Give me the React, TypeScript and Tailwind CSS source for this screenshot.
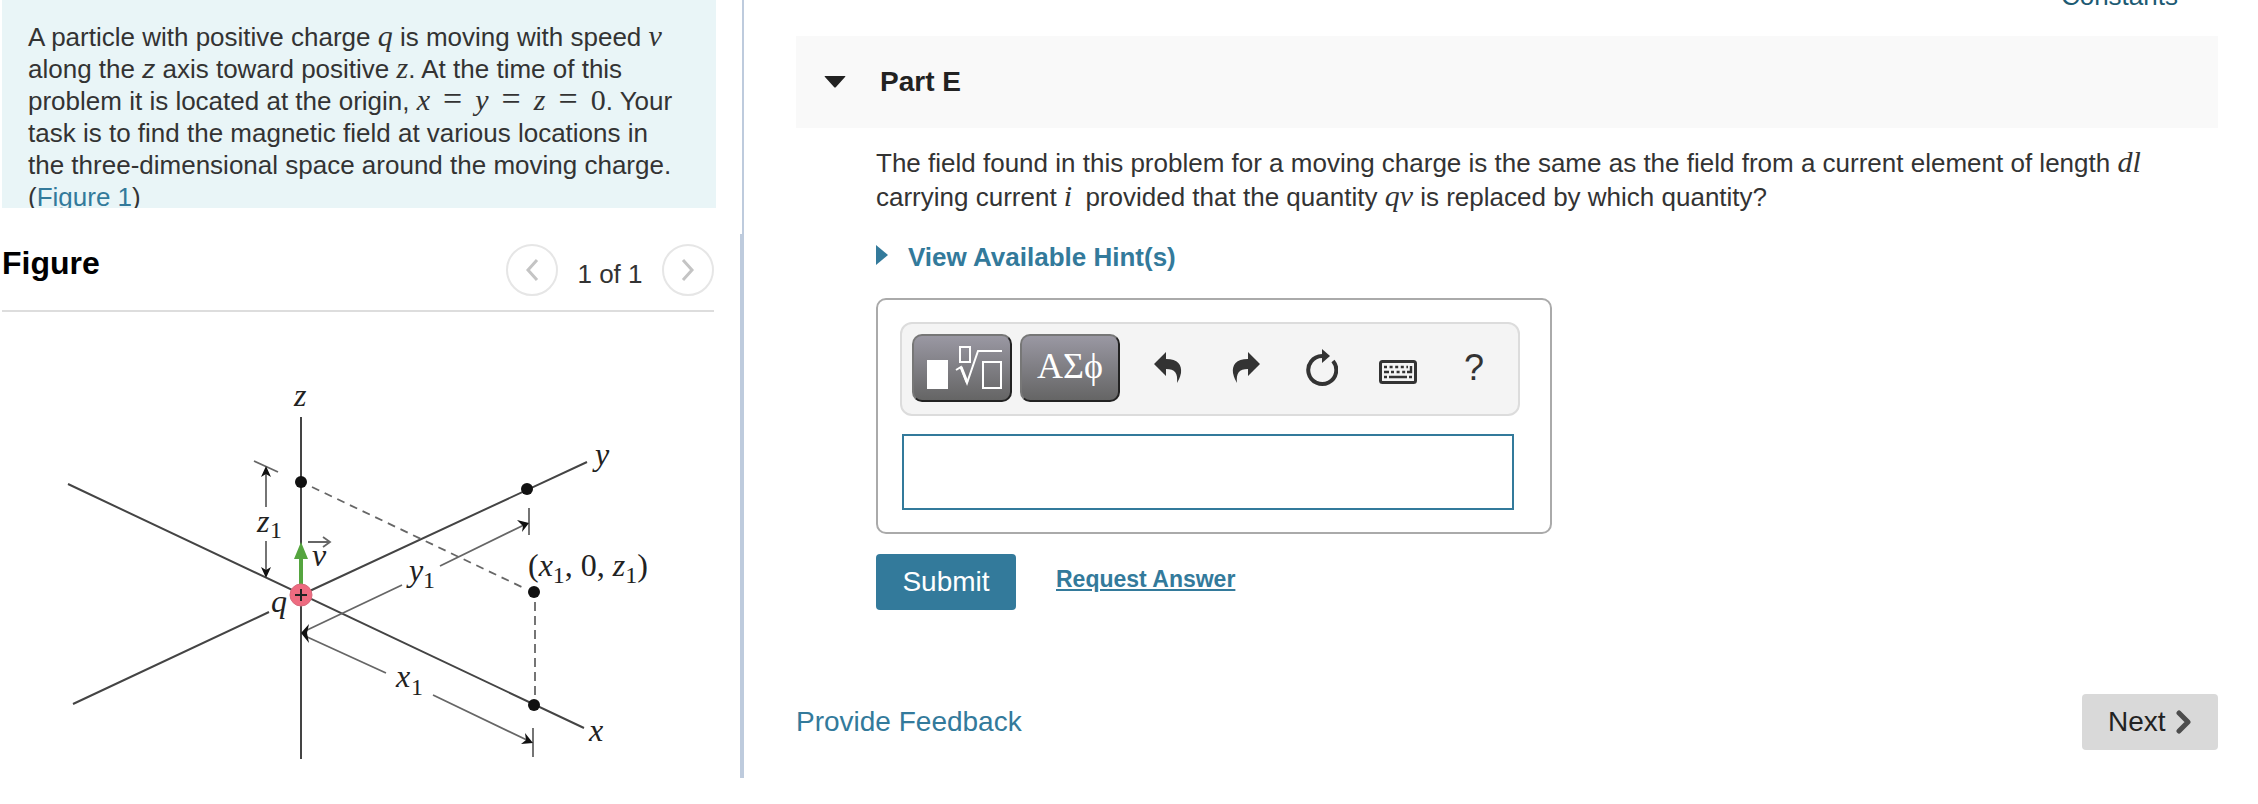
import React from "react";

type Slot = { children: React.ReactNode };

function M({ children }: Slot) {
  return <i className="font-['Liberation_Serif',serif] text-[30px] leading-[20px]">{children}</i>;
}

function Eq() {
  return <span className="mx-[13px] font-['Liberation_Serif',serif] text-[34px] leading-[20px]">=</span>;
}

function AxesFigure() {
  return (
    <svg
      className="block h-[380px] w-[640px]"
      viewBox="40 390 640 380"
      role="img"
      aria-label="Axes with a moving charge at the origin"
      fontFamily="'Liberation Serif', serif"
      fontSize="32"
      fill="#222"
    >
      <g stroke="#444" strokeWidth="2" fill="none">
        <path d="M301 417V759M301 595L587 462M269 612L73 704M68 484L584 728" />
      </g>
      <g stroke="#666" strokeWidth="1.8" fill="none">
        <path d="M254 461L278 472M266 470V507M266 541V573" />
        <path d="M440 566L524 525M402 585L305 631M529 508V535" />
        <path d="M305 636L386 673M433 695L529 741M533 728V757" />
        <path d="M312 487L526 589" strokeDasharray="8 6" />
        <path d="M535 602V698" strokeDasharray="9 5" />
        <path d="M308 542H329M323 537L330 542L323 547" />
      </g>
      <g fill="#111">
        <path d="M266 466L271 477L266 474L261 477ZM266 578L271 567L266 570L261 567Z" />
        <path d="M529 523L522 532L523 526L517 520ZM533 743L521 744L526 740L525 733Z" />
        <path d="M301 633L309 624L307 633L309 643Z" />
        <circle cx="301" cy="482" r="6" />
        <circle cx="527" cy="489" r="6" />
        <circle cx="534" cy="592" r="6" />
        <circle cx="534" cy="705" r="6" />
      </g>
      <path d="M299 585V559H294L301 542L308 559H303V585Z" fill="#55a53f" />
      <circle cx="301" cy="595" r="11" fill="#ee6b80" stroke="#d9697b" />
      <path d="M295 595H307M301 589V601" stroke="#222" strokeWidth="2" />
      <g fontStyle="italic">
        <text x="294" y="406">z</text>
        <text x="595" y="465">y</text>
        <text x="589" y="741">x</text>
        <text x="312" y="566">v</text>
        <text x="271" y="612">q</text>
        <text x="257" y="532">z</text>
        <text x="409" y="581">y</text>
        <text x="396" y="687">x</text>
      </g>
      <g fontSize="24">
        <text x="270" y="538">1</text>
        <text x="423" y="588">1</text>
        <text x="411" y="695">1</text>
      </g>
      <text x="528" y="576">
        (<tspan fontStyle="italic">x</tspan>
        <tspan fontSize="24" dy="7">1</tspan>
        <tspan dy="-7">, 0, </tspan>
        <tspan fontStyle="italic">z</tspan>
        <tspan fontSize="24" dy="7">1</tspan>
        <tspan dy="-7">)</tspan>
      </text>
    </svg>
  );
}

function LeftPanel() {
  return (
    <aside className="w-[740px] shrink-0 pl-[2px]">
      <div className="h-[208px] w-[714px] overflow-hidden bg-[#e9f5f7] pt-[21px] pr-6 pl-[26px] text-[26px] leading-[32px] text-[#333]">
        <p>
          A particle with positive charge <M>q</M> is moving with speed <M>v</M>
          <br />
          along the <i>z</i> axis toward positive <M>z</M>. At the time of this
          <br />
          problem it is located at the origin, <M>x</M>
          <Eq />
          <M>y</M>
          <Eq />
          <M>z</M>
          <Eq />
          <span className="font-['Liberation_Serif',serif] text-[30px] leading-[20px]">0</span>. Your
          <br />
          task is to find the magnetic field at various locations in
          <br />
          the three-dimensional space around the moving charge.
          <br />(<a href="#figure" className="text-[#337a9b]">Figure 1</a>)
        </p>
      </div>
      <header className="mt-9 flex h-[68px] w-[712px] items-start justify-between border-b-2 border-[#ddd]">
        <h2 id="figure" className="text-[32px] leading-[38px] font-bold text-black">Figure</h2>
        <nav aria-label="Figures" className="flex items-center text-[26px] text-[#333]">
          <button aria-label="Previous figure" className="flex size-[52px] items-center justify-center rounded-full border-2 border-[#e6e6e6]">
            <svg viewBox="0 0 14 24" className="h-6 w-[14px]" fill="none" stroke="#c4c4c4" strokeWidth="3"><path d="M12 2L3 12L12 22" /></svg>
          </button>
          <span className="w-[104px] pt-2 text-center">1 of 1</span>
          <button aria-label="Next figure" className="flex size-[52px] items-center justify-center rounded-full border-2 border-[#e6e6e6]">
            <svg viewBox="0 0 14 24" className="h-6 w-[14px]" fill="none" stroke="#c4c4c4" strokeWidth="3"><path d="M2 2L11 12L2 22" /></svg>
          </button>
        </nav>
      </header>
      <div className="pt-[78px] pl-[38px]">
        <AxesFigure />
      </div>
    </aside>
  );
}

const padButton =
  "flex h-[68px] w-[100px] items-center justify-center rounded-[10px] border-2 border-t-[#777] border-l-[#777] border-r-[#222] border-b-[#222] bg-linear-to-b from-[#9a98a3] to-[#656565] text-white";
const toolButton = "flex h-[68px] items-center justify-center text-[#333]";

function Toolbar() {
  return (
    <div role="toolbar" aria-label="Math tools" className="flex h-[94px] items-start rounded-xl border-2 border-[#dcdcdc] bg-[#f4f4f4] px-[10px] pt-[10px]">
      <button aria-label="Templates" className={padButton}>
        <svg viewBox="0 0 96 64" className="h-16 w-24" fill="none" stroke="#fff" strokeWidth="2">
          <rect x="13" y="24" width="21" height="29" fill="#fff" stroke="none" />
          <rect x="46" y="11" width="10" height="15" />
          <path d="M42 34L47 31L53 47L64 15H88" />
          <path d="M47 31L53 46" strokeWidth="3" />
          <rect x="69" y="26" width="18" height="26" />
        </svg>
      </button>
      <button aria-label="Greek letters" className={padButton + " ml-2 pb-1 font-['Liberation_Serif',serif] text-[36px]"}>
        ΑΣϕ
      </button>
      <button aria-label="Undo" className={toolButton + " ml-[34px] w-7"}>
        <svg viewBox="0 0 28 32" className="h-8 w-7" fill="currentColor"><path d="M0 12L12 0V7C24 7 28 13 27 21C26 26 24 29 23 31C24 21 21 17 12 17V24Z" /></svg>
      </button>
      <button aria-label="Redo" className={toolButton + " ml-[50px] w-7"}>
        <svg viewBox="0 0 28 32" className="h-8 w-7" fill="currentColor"><path d="M28 12L16 0V7C4 7 0 13 1 21C2 26 4 29 5 31C4 21 7 17 16 17V24Z" /></svg>
      </button>
      <button aria-label="Reset" className={toolButton + " ml-[46px] w-8"}>
        <svg viewBox="0 0 32 38" className="h-[38px] w-8" fill="none" stroke="currentColor" strokeWidth="4">
          <path d="M27 12A14 14 0 1 1 16 7" />
          <path d="M16 0L24 7L16 14Z" fill="currentColor" stroke="none" />
        </svg>
      </button>
      <button aria-label="Keyboard" className={toolButton + " ml-10 w-10 pt-2"}>
        <svg viewBox="0 0 38 24" className="h-6 w-[38px]" fill="none" stroke="currentColor">
          <rect x="1.5" y="1.5" width="35" height="21" rx="2" strokeWidth="3" />
          <path d="M5 7H29M12 12H28" strokeWidth="2.4" strokeDasharray="3 2.6" />
          <path d="M5 17H8M30 17H33M10 17H28M5 12H10M28 12H32V6" strokeWidth="2.4" />
        </svg>
      </button>
      <button aria-label="Help" className={toolButton + " ml-11 w-6 text-[36px]"}>?</button>
    </div>
  );
}

function AnswerArea() {
  return (
    <form onSubmit={(e) => e.preventDefault()}>
      <div className="w-[676px] rounded-[10px] border-2 border-[#aaa] p-[22px]">
        <div className="w-[620px]">
          <Toolbar />
        </div>
        <input aria-label="Answer" className="mt-[18px] ml-[2px] block h-[76px] w-[612px] border-2 border-[#337a9b] bg-white px-3 text-[26px] outline-none" />
      </div>
      <div className="mt-5 flex items-center">
        <button type="submit" className="h-14 w-[140px] rounded-[4px] bg-[#337a9b] text-[28px] text-white">Submit</button>
        <a href="#answer" className="ml-10 pb-[6px] text-[23px] font-bold text-[#337a9b] underline">Request Answer</a>
      </div>
    </form>
  );
}

export default function App() {
  return (
    <div className="flex overflow-hidden bg-white font-['Liberation_Sans',Arial,sans-serif]">
      <LeftPanel />
      <div className="flex w-1 shrink-0 flex-col items-end">
        <div className="h-[234px] w-[2px] bg-[#becbdd]" />
        <div className="h-[544px] w-1 bg-[#becbdd]" />
      </div>
      <main className="min-w-0 flex-1 pr-10 pl-[52px]">
        <div className="flex h-9 items-start justify-end overflow-hidden pr-10">
          <a href="#constants" className="-mt-5 text-[26px] leading-[32px] text-[#1d5b73]">Constants</a>
        </div>
        <header className="flex h-[92px] items-center bg-[#f9f9f9] pl-7">
          <svg viewBox="0 0 22 12" className="h-3 w-[22px]" fill="#222"><path d="M1 0H21Q22 0 21 1L12 11Q11 12 10 11L1 1Q0 0 1 0Z" /></svg>
          <h1 className="ml-[34px] text-[28px] font-bold text-[#222]">Part E</h1>
        </header>
        <div className="pt-[18px] pl-20">
          <p className="text-[26px] leading-[34px] text-[#333]">
            The field found in this problem for a moving charge is the same as the field from a current element of length <M>dl</M>
            <br />
            carrying current <span className="mr-[6px]"><M>i</M></span> provided that the quantity <M>qv</M> is replaced by which quantity?
          </p>
          <button className="mt-[26px] flex h-[34px] items-center text-[26px] font-bold text-[#337a9b]">
            <svg viewBox="0 0 12 20" className="mr-5 mb-1 h-5 w-3" fill="currentColor"><path d="M0 0L12 10L0 20Z" /></svg>
            View Available Hint(s)
          </button>
          <div className="mt-6">
            <AnswerArea />
          </div>
        </div>
        <footer className="mt-[84px] flex items-center justify-between text-[28px]">
          <a href="#feedback" className="text-[#337a9b]">Provide Feedback</a>
          <button className="flex h-14 w-[136px] items-center rounded-[4px] bg-[#d9d9d9] pl-[26px] text-[#222]">
            Next
            <svg viewBox="0 0 16 24" className="ml-[10px] h-6 w-4" fill="none" stroke="#4d4d4d" strokeWidth="5" strokeLinecap="round" strokeLinejoin="round"><path d="M3 3L12 12L3 21" /></svg>
          </button>
        </footer>
      </main>
    </div>
  );
}
